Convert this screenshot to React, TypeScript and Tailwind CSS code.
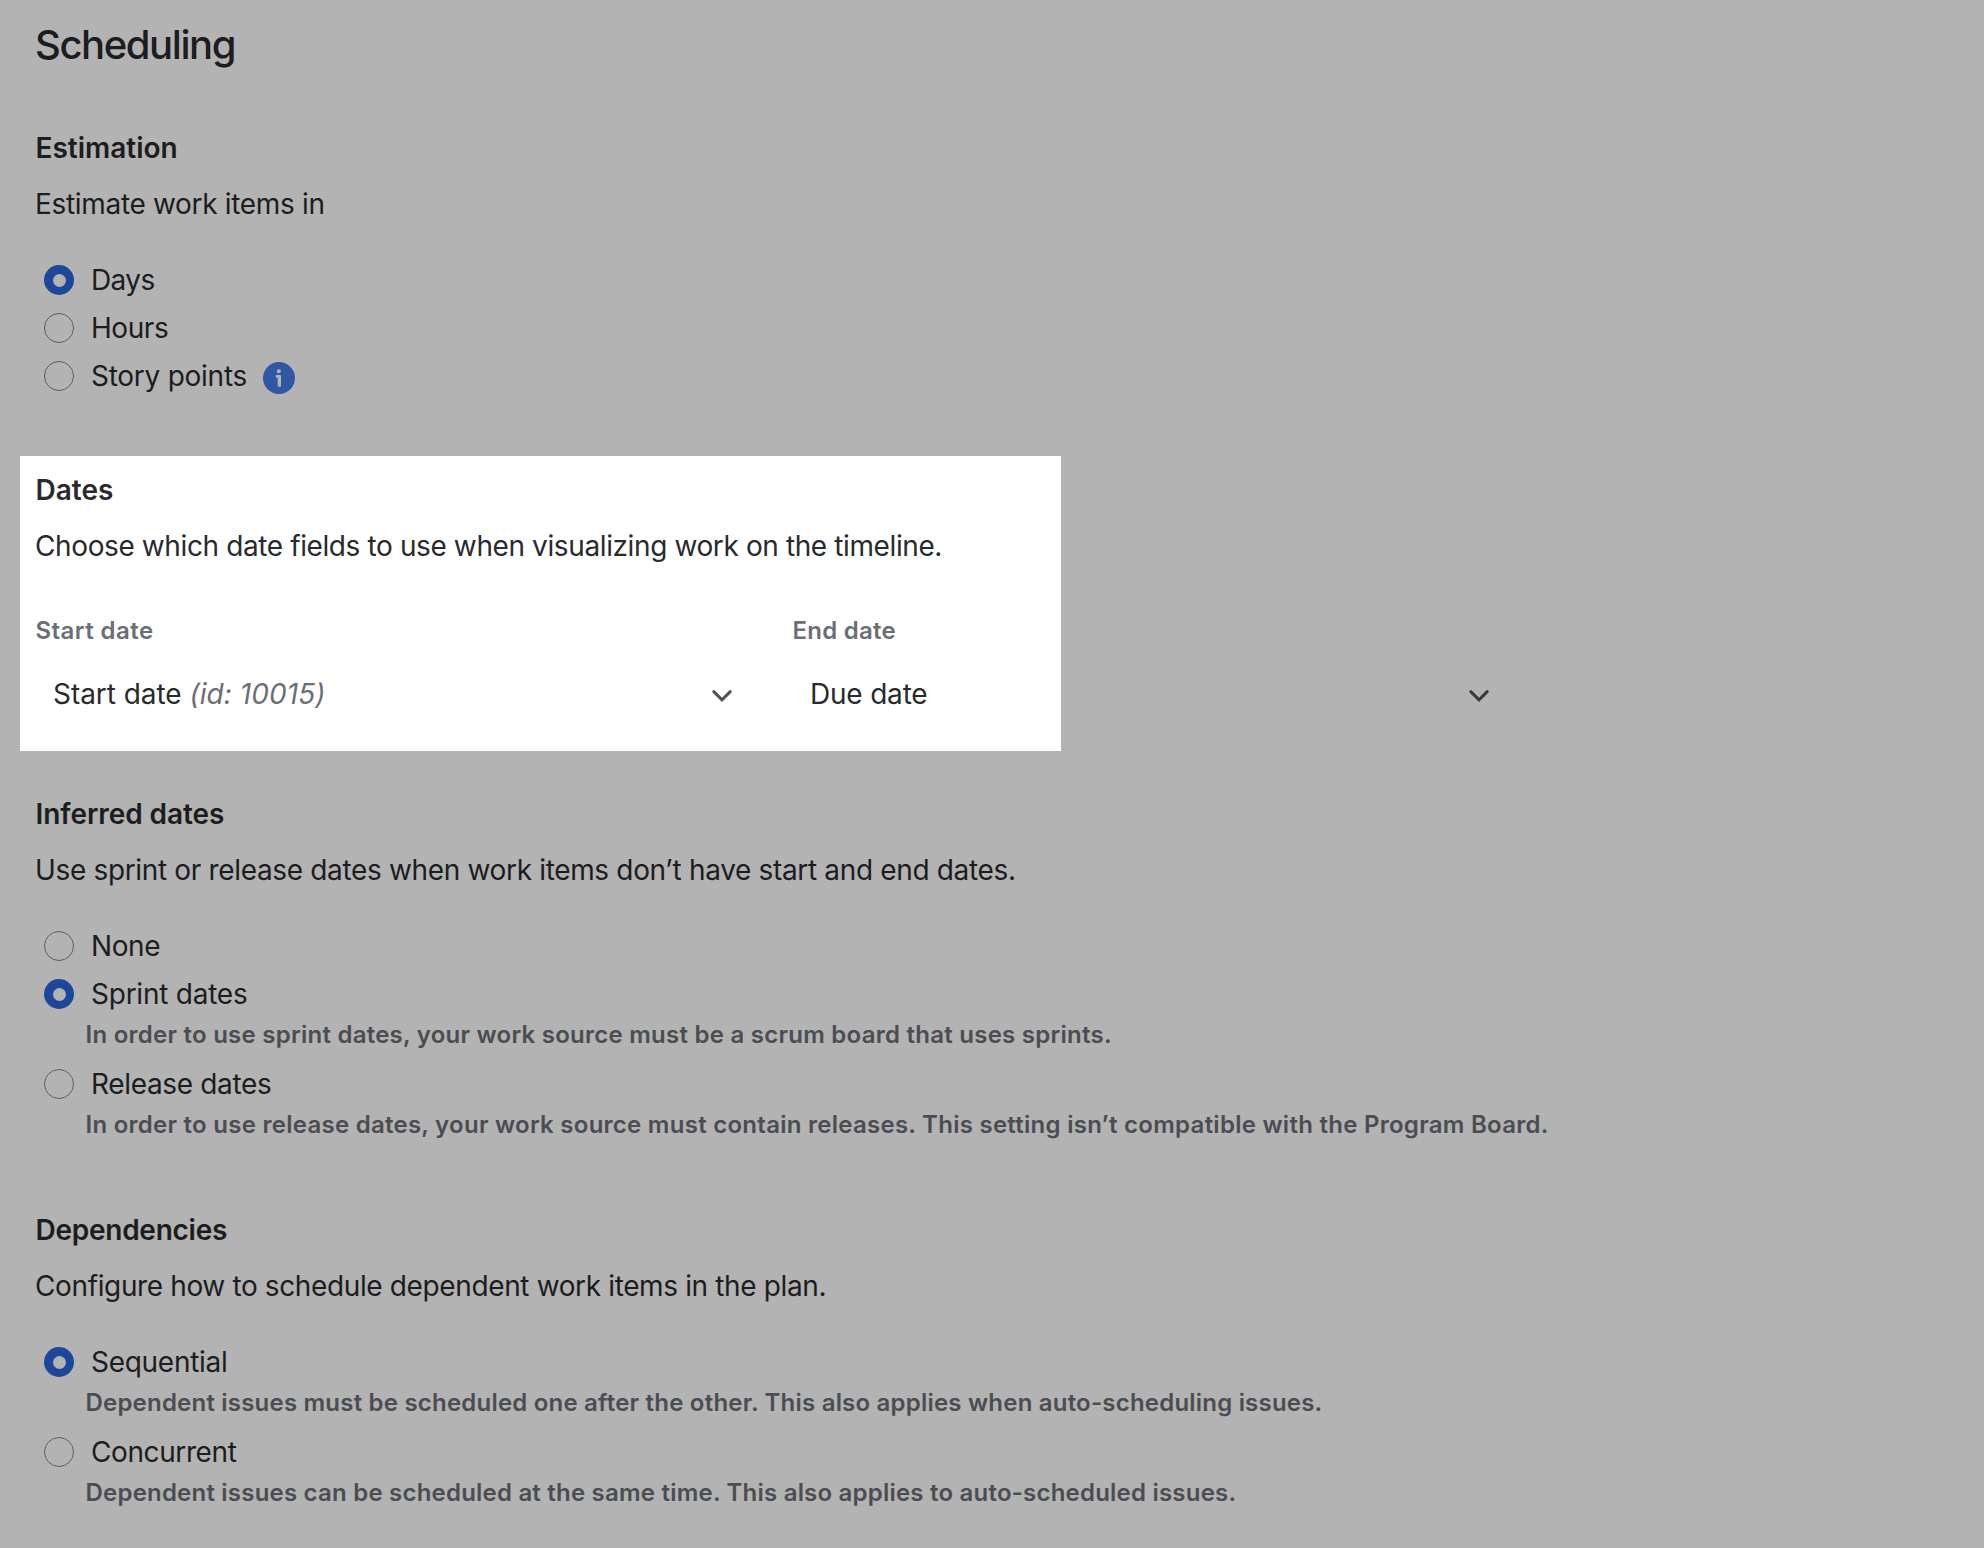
import type { ReactNode } from 'react'
import clsx from 'clsx'

function SectionHeading({ children, className }: { children: ReactNode; className?: string }) {
  return <h2 className={clsx('pl-[0.5px] text-[28px] leading-10 font-semibold', className)}>{children}</h2>
}

function Description({ children, className }: { children: ReactNode; className?: string }) {
  return <p className={clsx('mt-4 text-[28px] leading-10 whitespace-nowrap', className)}>{children}</p>
}

function InfoIcon() {
  return (
    <svg className="ml-4 mt-1 h-8 w-8" viewBox="0 0 32 32" fill="none">
      <circle cx="16" cy="16" r="16" fill="#3056a4" />
      <circle cx="15.9" cy="9.2" r="2" fill="#b3b3b3" />
      <path d="M13.6 13.1h3.4a1 1 0 0 1 1 1V24a.8.8 0 0 1-.8.8h-1.7a.8.8 0 0 1-.8-.8v-8.3h-1.1a.8.8 0 0 1-.8-.8v-1a.8.8 0 0 1 .8-.8z" fill="#b3b3b3" />
    </svg>
  )
}

function ChevronIcon({ className }: { className?: string }) {
  return (
    <svg
      className={clsx('mt-1 h-6 w-6', className)}
      viewBox="0 0 24 24"
      fill="none"
      stroke="currentColor"
      strokeWidth={3}
      strokeLinecap="round"
    >
      <path d="M3.8 7.6 12 15.8l8.2-8.2" />
    </svg>
  )
}

interface RadioOptionProps {
  label: string
  checked?: boolean
  hint?: string
  info?: boolean
  labelClass?: string
  hintClass?: string
}

function RadioOption({ label, checked, hint, info, labelClass, hintClass }: RadioOptionProps) {
  return (
    <div>
      <div className="flex h-12 items-center pl-[9px]">
        <span
          className={clsx(
            'flex h-[30px] w-[30px] shrink-0 items-center justify-center rounded-full',
            checked ? 'bg-[#1f4799]' : 'border border-[#5c5e65]'
          )}
        >
          {checked && <span className="h-[13px] w-[13px] rounded-full bg-[#b3b3b3]" />}
        </span>
        <span className={clsx('ml-[17px] text-[28px] leading-10', labelClass)}>{label}</span>
        {info && <InfoIcon />}
      </div>
      {hint && (
        <p className={clsx('h-[42px] pt-px pl-[50.5px] text-2xl leading-8 font-semibold whitespace-nowrap text-[#4b4d53]', hintClass)}>
          {hint}
        </p>
      )}
    </div>
  )
}

export default function App() {
  return (
    <div className="h-[1548px] w-[1984px] overflow-hidden bg-[#b3b3b3] pt-[21px] font-['Inter','Liberation_Sans',sans-serif] text-[#1c1d20]">
      {/* Title and estimation */}
      <div className="pl-[35px]">
        <h1 className="text-[40px] leading-[48px] font-[550] tracking-[-1.42px]">Scheduling</h1>

        <SectionHeading className="mt-[59px]">Estimation</SectionHeading>
        <Description className="tracking-[-0.32px]">Estimate work items in</Description>
        <div className="mt-8">
          <RadioOption label="Days" labelClass="tracking-[-0.6px]" checked />
          <RadioOption label="Hours" labelClass="tracking-[-0.45px]" />
          <RadioOption label="Story points" labelClass="tracking-[-0.26px]" info />
        </div>
      </div>

      {/* Highlighted dates section, the selects run past its right edge */}
      <div className="mt-14 ml-5 h-[295px] w-[1041px] bg-white pt-[14px] pl-[15px] text-[#292a2e]">
        <SectionHeading>Dates</SectionHeading>
        <Description className="tracking-[-0.39px]">
          Choose which date fields to use when visualizing work on the timeline.
        </Description>
        <div className="mt-[49px] grid w-[1482px] grid-cols-2 gap-x-8">
          <div>
            <div className="pl-[0.5px] text-2xl leading-8 font-semibold tracking-[0.44px] text-[#6b6e76]">Start date</div>
            <div className="mt-[27px] flex items-center justify-between pr-[26px] pl-[18px]">
              <div className="text-[28px] leading-10">
                <span className="tracking-[-0.05px]">Start date </span>
                <span className="tracking-[0.06px] text-[#6b6e76] italic">(id: 10015)</span>
              </div>
              <ChevronIcon className="text-[#505258]" />
            </div>
          </div>
          <div>
            <div className="pl-[0.5px] text-2xl leading-8 font-semibold tracking-[0.25px] text-[#6b6e76]">End date</div>
            <div className="mt-[27px] flex items-center justify-between pr-[26px] pl-[18px]">
              <span className="text-[28px] leading-10 tracking-[-0.2px]">Due date</span>
              <ChevronIcon className="text-[#38393d]" />
            </div>
          </div>
        </div>
      </div>

      {/* Inferred dates */}
      <div className="mt-[43px] pl-[35px]">
        <SectionHeading className="tracking-[-0.06px]">Inferred dates</SectionHeading>
        <Description className="tracking-[-0.34px]">
          Use sprint or release dates when work items don’t have start and end dates.
        </Description>
        <div className="mt-8">
          <RadioOption label="None" labelClass="tracking-[-0.4px]" />
          <RadioOption
            label="Sprint dates"
            labelClass="tracking-[-0.24px]"
            hint="In order to use sprint dates, your work source must be a scrum board that uses sprints."
            hintClass="tracking-[0.25px]"
            checked
          />
          <RadioOption
            label="Release dates"
            labelClass="tracking-[-0.34px]"
            hint="In order to use release dates, your work source must contain releases. This setting isn’t compatible with the Program Board."
            hintClass="tracking-[0.264px]"
          />
        </div>
      </div>

      {/* Dependencies */}
      <div className="mt-[60px] pl-[35px]">
        <SectionHeading className="tracking-[-0.26px]">Dependencies</SectionHeading>
        <Description className="tracking-[-0.37px]">
          Configure how to schedule dependent work items in the plan.
        </Description>
        <div className="mt-8">
          <RadioOption
            label="Sequential"
            labelClass="tracking-[-0.28px]"
            hint="Dependent issues must be scheduled one after the other. This also applies when auto-scheduling issues."
            hintClass="tracking-[0.208px]"
            checked
          />
          <RadioOption
            label="Concurrent"
            labelClass="tracking-[-0.4px]"
            hint="Dependent issues can be scheduled at the same time. This also applies to auto-scheduled issues."
            hintClass="tracking-[0.212px]"
          />
        </div>
      </div>
    </div>
  )
}
